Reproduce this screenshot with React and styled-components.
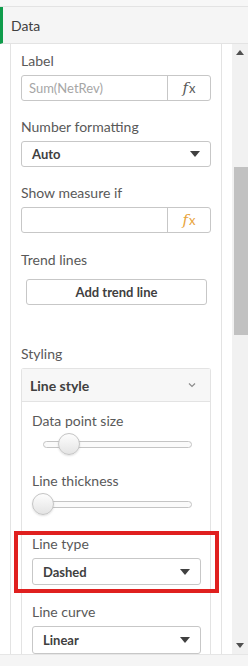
import React from "react";
import styled, { createGlobalStyle } from "styled-components";

const Global = createGlobalStyle`
  html, body { margin: 0; padding: 0; }
  body {
    width: 248px; height: 666px; overflow: hidden; background: #fff;
    font-family: Lato, "Open Sans", "Liberation Sans", sans-serif;
    color: #404040;
  }
  * { box-sizing: border-box; }
`;

const Page = styled.div`
  display: flex; flex-direction: column; height: 666px; width: 248px;
`;
const TopStrip = styled.div`
  height: 7px; background: #f7f7f7; border-bottom: 1px solid #e3e3e3; flex: none;
`;
const Header = styled.div`
  height: 37px; flex: none; background: #f5f5f5;
  border-left: 3px solid #0f9c4b; border-bottom: 1px solid #e3e3e3;
  display: flex; align-items: center; padding-left: 8px;
  font-size: 14px; color: #404040;
`;
const Body = styled.div`
  flex: 1; display: flex; overflow: hidden; min-height: 0;
`;
const Panel = styled.div`
  margin-left: 10px; width: 212px; border-left: 1px solid #e3e3e3; border-right: 1px solid #e3e3e3;
  padding: 8px 10px 0 10px; display: flex; flex-direction: column;
`;
const Spacer = styled.div`
  width: 10px; flex: none;
`;
const Scrollbar = styled.div`
  width: 16px; flex: none; background: #f1f1f1; display: flex; flex-direction: column;
  align-items: stretch; position: relative;
`;
const ArrowBtn = styled.div`
  height: 17px; display: flex; align-items: center; justify-content: center; flex: none;
`;
const Track = styled.div`
  flex: 1; padding-top: 106px; padding-left: 2px;
`;
const Thumb = styled.div`
  height: 168px; background: #c1c1c1;
`;
const BottomStrip = styled.div`
  height: 12px; flex: none; background: #f5f5f5; border-top: 1px solid #e6e6e6;
`;

const Label = styled.div`
  font-size: 14px; line-height: 18px; color: #595959; height: 18px;
  margin-top: ${p => p.$mt || 0}px; margin-bottom: ${p => p.$mb ?? 5}px;
  white-space: nowrap;
`;
const InputRow = styled.div`
  display: flex; height: 28px; border: 1px solid #c7c7c7; border-radius: 3px; background: #fff;
`;
const InputField = styled.div`
  flex: 1; font-size: 13px; color: #a6a6a6; padding-left: 7px; display: flex; align-items: center;
`;
const FxBtn = styled.div`
  width: 43px; border-left: 1px solid #c7c7c7; display: flex; align-items: center; justify-content: center;
  color: ${p => p.$color}; font-size: 15px;
`;
const F = styled.span`
  font-family: "DejaVu Serif", "Liberation Serif", serif; font-style: italic; font-size: 15px;
`;
const X = styled.span`
  font-size: 13px; margin-left: 1px;
`;
const Select = styled.div`
  height: ${p => p.$h || 28}px; border: 1px solid #c7c7c7; border-radius: 3px; background: #fff;
  display: flex; align-items: center; justify-content: space-between; padding: 0 10px 0 10px;
  font-size: 13px; font-weight: 700; color: #404040;
`;
const Caret = styled.span`
  width: 0; height: 0; border-left: 5px solid transparent; border-right: 5px solid transparent;
  border-top: 6px solid #404040;
`;
const Button = styled.div`
  margin: 0 4px 0 5px; height: 28px; border: 1px solid #c7c7c7; border-radius: 3px;
  display: flex; align-items: center; justify-content: center; font-size: 13px; font-weight: 700; color: #404040;
`;
const Box = styled.div`
  border: 1px solid #e3e3e3; border-bottom: none; border-radius: 3px 3px 0 0; flex: 1;
  display: flex; flex-direction: column;
`;
const BoxHeader = styled.div`
  height: 33px; flex: none; background: #f7f7f7; border-bottom: 1px solid #e3e3e3;
  display: flex; align-items: center; justify-content: space-between; padding: 0 14px 0 8px;
  font-size: 14px; font-weight: 700; color: #404040;
`;
const BoxBody = styled.div`
  padding: 10px 9px 0 10px; display: flex; flex-direction: column;
`;
const SliderWrap = styled.div`
  position: relative; height: 22px; margin: 0 9px 0 11px; display: flex; align-items: center;
`;
const SliderTrack = styled.div`
  height: 7px; width: 100%; border: 1px solid #c4c4c4; border-radius: 4px; background: #fafafa;
`;
const SliderThumb = styled.div`
  position: absolute; top: 0; width: 22px; height: 22px; border-radius: 50%;
  border: 1px solid #c4c4c4; background: linear-gradient(#fdfdfd, #e4e4e4);
  box-shadow: 0 1px 2px rgba(0,0,0,0.12);
`;
const Field = styled.div`
  position: relative; display: flex; flex-direction: column;
`;
const Highlight = styled.div`
  position: absolute; left: -18px; right: -18px; top: -4px; bottom: -8px;
  border: 4px solid #e0201f; pointer-events: none;
`;

const Fx = ({ color }) => (
  <FxBtn $color={color}><F>f</F><X>x</X></FxBtn>
);

const Chevron = () => (
  <svg width="8" height="6" viewBox="0 0 8 6"><path d="M1 1.5 L4 4.5 L7 1.5" fill="none" stroke="#8c8c8c" strokeWidth="1.2" /></svg>
);

export default function App() {
  return (
    <Page>
      <Global />
      <TopStrip />
      <Header>Data</Header>
      <Body>
        <Panel>
          <Label>Label</Label>
          <InputRow><InputField>Sum(NetRev)</InputField><Fx color="#595959" /></InputRow>
          <Label $mt={17}>Number formatting</Label>
          <Select>Auto<Caret /></Select>
          <Label $mt={17}>Show measure if</Label>
          <InputRow><InputField /><Fx color="#e8a33a" /></InputRow>
          <Label $mt={18} $mb={10}>Trend lines</Label>
          <Button>Add trend line</Button>
          <Label $mt={40}>Styling</Label>
          <Box>
            <BoxHeader>Line style<Chevron /></BoxHeader>
            <BoxBody>
              <Label $mb={3}>Data point size</Label>
              <SliderWrap><SliderTrack /><SliderThumb style={{ left: "15px" }} /></SliderWrap>
              <Label $mt={17} $mb={3}>Line thickness</Label>
              <SliderWrap><SliderTrack /><SliderThumb style={{ left: "-11px" }} /></SliderWrap>
              <Field style={{ marginTop: 20 }}>
                <Highlight />
                <Label>Line type</Label>
                <Select $h={27}>Dashed<Caret /></Select>
              </Field>
              <Label $mt={18}>Line curve</Label>
              <Select>Linear<Caret /></Select>
            </BoxBody>
          </Box>
        </Panel>
        <Spacer />
        <Scrollbar>
          <ArrowBtn>
            <svg width="8" height="5" viewBox="0 0 8 5"><path d="M0 5 L4 0 L8 5 Z" fill="#505050" /></svg>
          </ArrowBtn>
          <Track><Thumb /></Track>
          <ArrowBtn>
            <svg width="8" height="5" viewBox="0 0 8 5"><path d="M0 0 L4 5 L8 0 Z" fill="#505050" /></svg>
          </ArrowBtn>
        </Scrollbar>
      </Body>
      <BottomStrip />
    </Page>
  );
}
